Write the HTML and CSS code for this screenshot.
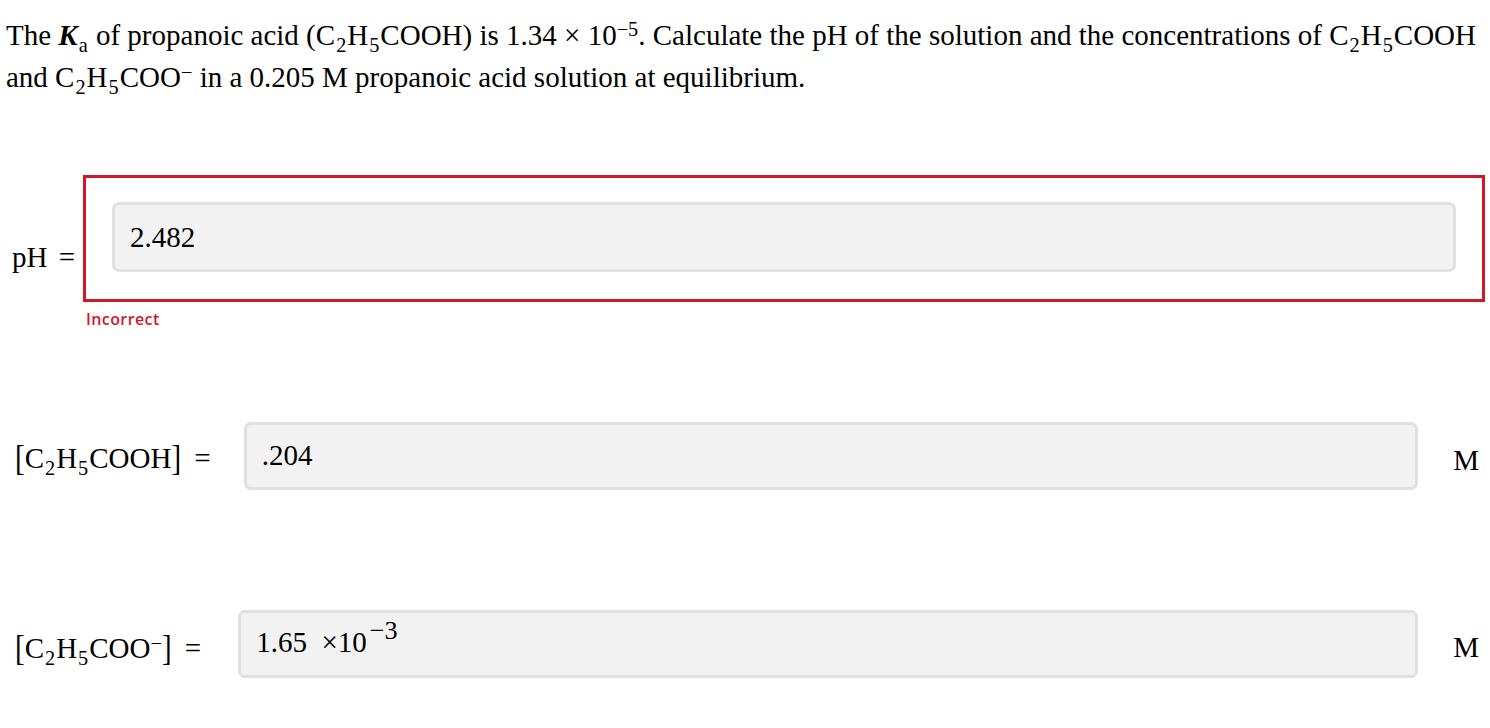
FILE: index.html
```html
<!DOCTYPE html>
<html>
<head>
<meta charset="utf-8">
<link rel="stylesheet" href="styles.css">
</head>
<body>
<div class="page">
  <p class="question">The <span class="k">K</span><span class="sub">a</span> of propanoic acid (C<span class="sub">2</span>H<span class="sub">5</span>COOH) is 1.34 × 10<span class="sup">−5</span>. Calculate the pH of the solution and the concentrations of C<span class="sub">2</span>H<span class="sub">5</span>COOH and C<span class="sub">2</span>H<span class="sub">5</span>COO<span class="sup-small">−</span> in a 0.205 M propanoic acid solution at equilibrium.</p>

  <div class="row row-ph">
    <div class="label label-ph">pH <span class="eq">=</span></div>
    <div class="answer-col">
      <div class="wrong-box">
        <div class="field field-tall">2.482</div>
      </div>
      <div class="feedback">Incorrect</div>
    </div>
  </div>

  <div class="row row-acid">
    <div class="label label-conc label-acid"><span class="br">[</span>C<span class="sub">2</span>H<span class="sub">5</span>COOH<span class="br">]</span> <span class="eq eq-conc">=</span></div>
    <div class="field field-wide field-acid">.204</div>
    <div class="unit unit-acid">M</div>
  </div>

  <div class="row row-base">
    <div class="label label-conc label-base"><span class="br">[</span>C<span class="sub">2</span>H<span class="sub">5</span>COO<span class="sup-small">−</span><span class="br">]</span> <span class="eq eq-conc">=</span></div>
    <div class="field field-wide field-base">1.65&nbsp; ×10<span class="exp">−3</span></div>
    <div class="unit unit-base">M</div>
  </div>
</div>
</body>
</html>
```

FILE: styles.css
```css
html, body {
  margin: 0;
  padding: 0;
  background: #ffffff;
}

body {
  font-family: "Liberation Serif", "Times New Roman", serif;
  color: #000000;
}

.page {
  padding: 14px 5px 0 6px;
}

.question {
  margin: 0;
  font-size: 29px;
  line-height: 42px;
}

.k {
  font-weight: bold;
  font-style: italic;
}

.sub {
  font-size: 0.7em;
  line-height: 0;
  vertical-align: -0.36em;
  margin-left: 1px;
  margin-right: 1px;
}

.sup {
  font-size: 0.7em;
  line-height: 0;
  vertical-align: 0.45em;
}

.sup-small {
  font-size: 0.7em;
  line-height: 0;
  vertical-align: 0.4em;
}

.row {
  display: flex;
  align-items: flex-start;
}

.label {
  font-size: 29px;
  line-height: 30px;
  padding-left: 6px;
  white-space: nowrap;
}

.label-ph {
  width: 71px;
  padding-top: 67px;
}

.row-ph {
  margin-top: 77px;
}

.answer-col {
  flex: 1;
  display: flex;
  flex-direction: column;
}

.wrong-box {
  border: 3px solid #d0182a;
  padding: 24px 26px 27px 26px;
}

.field {
  box-sizing: border-box;
  background: #f2f2f2;
  border: 3px solid #e0e0e0;
  border-radius: 7px;
  font-size: 29px;
  line-height: 30px;
  padding-left: 15px;
  white-space: nowrap;
}

.field-tall {
  height: 70px;
  padding-top: 17px;
}

.field-wide {
  height: 68px;
  flex: 1;
}

.field-acid {
  padding-top: 15px;
}

.field-base {
  padding-top: 14px;
}

.feedback {
  margin-top: 8px;
  padding-left: 3px;
  font-family: "Open Sans", "Liberation Sans", sans-serif;
  font-weight: 600;
  font-size: 16px;
  letter-spacing: 0.4px;
  line-height: 19px;
  color: #d0182a;
}

.row-acid {
  margin-top: 93px;
}

.row-base {
  margin-top: 120px;
}

.label-acid {
  padding-top: 21px;
  padding-left: 9px;
  margin-right: 33px;
}

.label-base {
  padding-top: 23px;
  padding-left: 9px;
  margin-right: 37px;
}

.br {
  display: inline-block;
  transform: scaleY(1.2);
}

.eq {
  margin-left: 4px;
}

.eq-conc {
  margin-left: 6px;
}

.exp {
  font-size: 0.9em;
  line-height: 0;
  vertical-align: 0.5em;
  margin-left: 3px;
}

.unit {
  font-size: 29px;
  line-height: 30px;
  margin-left: 35px;
  margin-right: 6px;
}

.unit-acid {
  padding-top: 23px;
}

.unit-base {
  padding-top: 22px;
}
```
